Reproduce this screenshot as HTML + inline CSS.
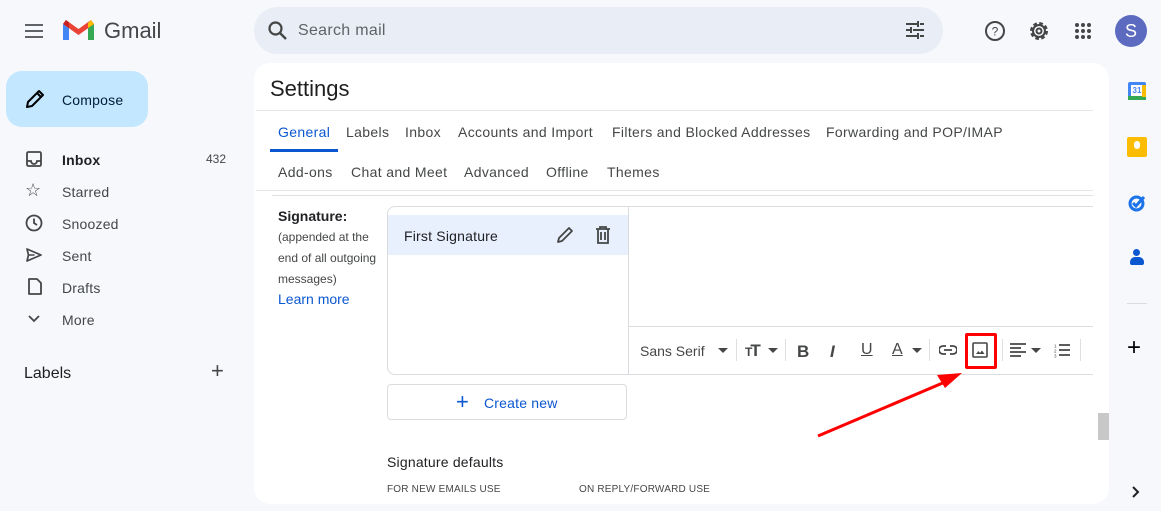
<!DOCTYPE html>
<html><head><meta charset="utf-8"><style>
*{box-sizing:border-box;margin:0;padding:0}
body{width:1161px;height:511px;overflow:hidden;background:#f6f8fc;font-family:"Liberation Sans",Arial,sans-serif;position:relative;color:#202124}
.a{position:absolute}
.nav{font-size:14px;color:#444746;letter-spacing:0.2px}
.tab{position:absolute;font-size:14px;color:#444746;letter-spacing:0.35px;margin-top:1px}
svg{display:block}
</style></head><body>
<!-- header -->
<svg class="a" style="left:24px;top:21px" width="20" height="20" viewBox="0 0 20 20"><path d="M1 4h18M1 10h18M1 16h18" stroke="#5f6368" stroke-width="2"/></svg>
<svg class="a" style="left:63px;top:20px" width="31" height="22" viewBox="0 0 31 22">
<path d="M0 4v16h6V8z" fill="#4285f4"/><path d="M25 8v12h6V4z" fill="#34a853"/>
<path d="M0 4l15.5 11L31 4 28 0 15.5 9 3 0z" fill="#ea4335"/><path d="M0 4 3 0 6 2.5V8z" fill="#c5221f"/><path d="M25 3 28 0 31 4 25 8z" fill="#fbbc04"/></svg>
<div class="a" style="left:104px;top:18px;font-size:22px;color:#444746">Gmail</div>
<div class="a" style="left:254px;top:7px;width:689px;height:47px;border-radius:24px;background:#e9eef6"></div>
<svg class="a" style="left:267px;top:20px" width="22" height="22" viewBox="0 0 22 22"><circle cx="8.5" cy="8.5" r="6" fill="none" stroke="#444746" stroke-width="2.2"/><path d="M13 13l6 6" stroke="#444746" stroke-width="2.4"/></svg>
<div class="a" style="left:298px;top:22px;font-size:16px;color:#5f6368;letter-spacing:0.3px">Search mail</div>
<svg class="a" style="left:905px;top:20px" width="20" height="20" viewBox="0 0 20 20"><path d="M1 4h11M15 4h4M1 10h4M8 10h11M1 16h11M15 16h4M13 1v6M6 7v6M13 13v6" stroke="#444746" stroke-width="2"/></svg>
<svg class="a" style="left:984px;top:20px" width="22" height="22" viewBox="0 0 22 22"><circle cx="11" cy="11" r="9" fill="none" stroke="#444746" stroke-width="2"/><text x="11" y="15.5" font-size="12" text-anchor="middle" fill="#444746" font-family="Liberation Sans">?</text></svg>
<svg class="a" style="left:1028px;top:20px" width="22" height="22" viewBox="0 0 22 22"><circle cx="11" cy="11" r="7" fill="none" stroke="#444746" stroke-width="4" stroke-dasharray="3.3 2.2"/><circle cx="11" cy="11" r="6" fill="none" stroke="#444746" stroke-width="2"/><circle cx="11" cy="11" r="2.5" fill="none" stroke="#444746" stroke-width="2"/></svg>
<svg class="a" style="left:1074px;top:22px" width="18" height="18" viewBox="0 0 18 18" fill="#444746"><circle cx="3" cy="3" r="2"/><circle cx="9" cy="3" r="2"/><circle cx="15" cy="3" r="2"/><circle cx="3" cy="9" r="2"/><circle cx="9" cy="9" r="2"/><circle cx="15" cy="9" r="2"/><circle cx="3" cy="15" r="2"/><circle cx="9" cy="15" r="2"/><circle cx="15" cy="15" r="2"/></svg>
<div class="a" style="left:1115px;top:15px;width:32px;height:32px;border-radius:50%;background:#5c6bc0;color:#fff;font-size:18px;text-align:center;line-height:32px">S</div>
<!-- compose -->
<div class="a" style="left:6px;top:71px;width:142px;height:56px;border-radius:16px;background:#c2e7ff"></div>
<svg class="a" style="left:25px;top:89px" width="20" height="20" viewBox="0 0 20 20"><path d="M2 18l1-5L14 2l4 4L7 17z M12 4l4 4" fill="none" stroke="#000" stroke-width="2" stroke-linejoin="round"/></svg>
<div class="a" style="left:62px;top:92px;font-size:14px;color:#001d35;letter-spacing:0.2px">Compose</div>
<!-- nav -->
<svg class="a" style="left:26px;top:151px" width="16" height="16" viewBox="0 0 16 16"><rect x="1" y="1" width="14" height="14" rx="1.5" fill="none" stroke="#444746" stroke-width="1.8"/><path d="M1 10h4a3 3 0 0 0 6 0h4" fill="none" stroke="#444746" stroke-width="1.8"/></svg>
<div class="a nav" style="left:62px;top:152px;font-weight:bold;color:#202124">Inbox</div>
<div class="a" style="left:206px;top:152px;font-size:12px;color:#444746">432</div>
<div class="a" style="left:25px;top:180px;font-size:18px;color:#444746">☆</div>
<div class="a nav" style="left:62px;top:184px">Starred</div>
<svg class="a" style="left:25px;top:214px" width="18" height="18" viewBox="0 0 18 18"><circle cx="9" cy="9" r="7.5" fill="none" stroke="#444746" stroke-width="1.8"/><path d="M9 4.5V9l3 2" fill="none" stroke="#444746" stroke-width="1.8"/></svg>
<div class="a nav" style="left:62px;top:216px">Snoozed</div>
<svg class="a" style="left:26px;top:248px" width="16" height="14" viewBox="0 0 16 14"><path d="M1 1l14 6-14 6 1.5-6z" fill="none" stroke="#444746" stroke-width="1.7" stroke-linejoin="round"/><path d="M2.5 7h6" stroke="#444746" stroke-width="1.5"/></svg>
<div class="a nav" style="left:62px;top:248px">Sent</div>
<svg class="a" style="left:28px;top:278px" width="14" height="17" viewBox="0 0 14 17"><path d="M1 1h8l4 4v11H1z" fill="none" stroke="#444746" stroke-width="1.8" stroke-linejoin="round"/></svg>
<div class="a nav" style="left:62px;top:280px">Drafts</div>
<svg class="a" style="left:28px;top:315px" width="12" height="8" viewBox="0 0 12 8"><path d="M1 1l5 5 5-5" fill="none" stroke="#444746" stroke-width="1.8"/></svg>
<div class="a nav" style="left:62px;top:312px">More</div>
<div class="a" style="left:24px;top:365px;font-size:16px;color:#1f1f1f">Labels</div>
<div class="a" style="left:211px;top:358px;font-size:22px;color:#444746;font-weight:300">+</div>
<!-- main panel -->
<div class="a" style="left:254px;top:63px;width:855px;height:441px;background:#fff;border-radius:16px;overflow:hidden">
 <div class="a" style="left:16px;top:13px;font-size:22px;color:#1f1f1f">Settings</div>
 <div class="a" style="left:2px;top:47px;width:840px;height:1px;background:#e6e6e6"></div>
 <div class="tab" style="left:24px;top:60px;color:#0b57d0">General</div>
 <div class="a" style="left:16px;top:86px;width:68px;height:3px;background:#0b57d0"></div>
 <div class="tab" style="left:92px;top:60px">Labels</div>
 <div class="tab" style="left:151px;top:60px">Inbox</div>
 <div class="tab" style="left:204px;top:60px">Accounts and Import</div>
 <div class="tab" style="left:358px;top:60px">Filters and Blocked Addresses</div>
 <div class="tab" style="left:572px;top:60px">Forwarding and POP/IMAP</div>
 <div class="tab" style="left:24px;top:100px">Add-ons</div>
 <div class="tab" style="left:97px;top:100px">Chat and Meet</div>
 <div class="tab" style="left:210px;top:100px">Advanced</div>
 <div class="tab" style="left:292px;top:100px">Offline</div>
 <div class="tab" style="left:353px;top:100px">Themes</div>
 <div class="a" style="left:2px;top:127px;width:840px;height:1px;background:#e6e6e6"></div>
 <div class="a" style="left:18px;top:132px;width:822px;height:1px;background:#e0e0e0"></div>
 <div class="a" style="left:24px;top:145px;font-size:14px;font-weight:bold;color:#202124">Signature:</div>
 <div class="a" style="left:24px;top:164px;font-size:12px;line-height:21px;color:#444746">(appended at the<br>end of all outgoing<br>messages)</div>
 <div class="a" style="left:24px;top:228px;font-size:14px;color:#0b57d0">Learn more</div>
 <!-- sig box -->
 <div class="a" style="left:133px;top:143px;width:720px;height:169px;border:1px solid #dadce0;border-radius:8px 0 0 8px;border-right:none"></div>
 <div class="a" style="left:134px;top:152px;width:240px;height:40px;background:#e8f0fe"></div>
 <div class="a" style="left:150px;top:165px;font-size:14px;color:#202124;letter-spacing:0.2px">First Signature</div>
 <svg class="a" style="left:302px;top:163px" width="18" height="18" viewBox="0 0 18 18"><path d="M2 16l1-4L13 2l3 3L6 15z" fill="none" stroke="#444746" stroke-width="1.8" stroke-linejoin="round"/></svg>
 <svg class="a" style="left:341px;top:163px" width="16" height="18" viewBox="0 0 16 18"><path d="M1 3h14M5 3V1h6v2M3 3v14h10V3M6 6v8M10 6v8" fill="none" stroke="#444746" stroke-width="1.8"/></svg>
 <div class="a" style="left:374px;top:144px;width:1px;height:168px;background:#dadce0"></div>
 <div class="a" style="left:374px;top:263px;width:470px;height:1px;background:#dadce0"></div>
 <div class="a" style="left:386px;top:280px;font-size:14px;color:#444746">Sans Serif</div>
 <svg class="a" style="left:464px;top:285px" width="10" height="6"><path d="M0 0h10L5 5z" fill="#444746"/></svg>
 <div class="a" style="left:482px;top:276px;width:1px;height:22px;background:#e0e0e0"></div>
 <div class="a" style="left:491px;top:278px;font-size:17px;font-weight:bold;color:#444746;letter-spacing:-2px"><span style="font-size:12px">T</span>T</div>
 <svg class="a" style="left:514px;top:285px" width="10" height="6"><path d="M0 0h10L5 5z" fill="#444746"/></svg>
 <div class="a" style="left:531px;top:276px;width:1px;height:22px;background:#e0e0e0"></div>
 <div class="a" style="left:543px;top:279px;font-size:17px;font-weight:bold;color:#444746">B</div>
 <div class="a" style="left:576px;top:279px;font-size:17px;font-style:italic;font-weight:bold;color:#444746">I</div>
 <div class="a" style="left:607px;top:278px;font-size:16px;color:#444746;text-decoration:underline">U</div>
 <div class="a" style="left:638px;top:278px;font-size:16px;color:#444746;text-decoration:underline">A</div>
 <svg class="a" style="left:658px;top:285px" width="10" height="6"><path d="M0 0h10L5 5z" fill="#444746"/></svg>
 <div class="a" style="left:675px;top:276px;width:1px;height:22px;background:#e0e0e0"></div>
 <svg class="a" style="left:685px;top:282px" width="18" height="10" viewBox="0 0 18 10"><path d="M7 1H4a4 4 0 0 0 0 8h3M11 1h3a4 4 0 0 1 0 8h-3M5 5h8" fill="none" stroke="#444746" stroke-width="1.8"/></svg>
 <svg class="a" style="left:718px;top:279px" width="16" height="16" viewBox="0 0 16 16"><rect x="1" y="1" width="14" height="14" rx="1" fill="none" stroke="#444746" stroke-width="1.6"/><path d="M4 12l2.5-3 1.5 2 2-2.5 2.5 3.5z" fill="#444746"/></svg>
 <div class="a" style="left:711px;top:270px;width:32px;height:36px;border:3px solid #f00;border-radius:2px"></div>
 <div class="a" style="left:748px;top:276px;width:1px;height:22px;background:#e0e0e0"></div>
 <svg class="a" style="left:756px;top:280px" width="16" height="15" viewBox="0 0 16 15"><path d="M0 1h16M0 5h11M0 9h16M0 13h11" stroke="#444746" stroke-width="1.8"/></svg>
 <svg class="a" style="left:777px;top:285px" width="10" height="6"><path d="M0 0h10L5 5z" fill="#444746"/></svg>
 <svg class="a" style="left:800px;top:280px" width="16" height="15" viewBox="0 0 16 15"><path d="M5 2h11M5 7h11M5 12h11" stroke="#444746" stroke-width="1.8"/><text x="0" y="4.5" font-size="4.5" fill="#444746">1</text><text x="0" y="9.5" font-size="4.5" fill="#444746">2</text><text x="0" y="14.5" font-size="4.5" fill="#444746">3</text></svg>
 <div class="a" style="left:826px;top:276px;width:1px;height:22px;background:#e0e0e0"></div>
 <div class="a" style="left:839px;top:0;width:16px;height:441px;background:#fff"></div>
 <div class="a" style="left:844px;top:350px;width:11px;height:27px;background:#c8c8c8"></div>
 <!-- create new -->
 <div class="a" style="left:133px;top:321px;width:240px;height:36px;border:1px solid #dadce0;border-radius:4px"></div>
 <div class="a" style="left:202px;top:326px;font-size:22px;color:#0b57d0;font-weight:300">+</div>
 <div class="a" style="left:230px;top:332px;font-size:14px;color:#0b57d0;letter-spacing:0.2px">Create new</div>
 <div class="a" style="left:133px;top:391px;font-size:14px;color:#202124;letter-spacing:0.2px">Signature defaults</div>
 <div class="a" style="left:133px;top:421px;font-size:10px;color:#444746;letter-spacing:0.2px">FOR NEW EMAILS USE</div>
 <div class="a" style="left:325px;top:421px;font-size:10px;color:#444746;letter-spacing:0.2px">ON REPLY/FORWARD USE</div>
</div>
<!-- arrow -->
<svg class="a" style="left:810px;top:360px" width="160" height="80" viewBox="0 0 160 80"><path d="M8 76L135 22" stroke="#f00" stroke-width="3"/><path d="M152 13l-25 2 8 13z" fill="#f00"/></svg>
<!-- right side apps -->
<div class="a" style="left:1128px;top:82px;width:18px;height:18px;border-radius:2px;background:#4285f4"></div>
<div class="a" style="left:1131px;top:85px;width:12px;height:12px;background:#fff;font-size:8px;color:#4285f4;text-align:center;line-height:12px;font-weight:bold">31</div>
<div class="a" style="left:1128px;top:96px;width:18px;height:4px;background:#34a853"></div>
<div class="a" style="left:1142px;top:85px;width:4px;height:12px;background:#fbbc04"></div>
<div class="a" style="left:1127px;top:137px;width:20px;height:20px;border-radius:2px;background:#fbbc04"></div>
<div class="a" style="left:1134px;top:141px;width:6px;height:8px;border-radius:3px;background:#fff"></div>
<svg class="a" style="left:1127px;top:193px" width="20" height="20" viewBox="0 0 20 20"><circle cx="9.5" cy="10.5" r="6.5" fill="none" stroke="#1a73e8" stroke-width="3"/><path d="M6 10l3 3 8-9" fill="none" stroke="#1a73e8" stroke-width="3"/></svg>
<div class="a" style="left:1133px;top:249px;width:7px;height:7px;border-radius:50%;background:#0b57d0"></div>
<div class="a" style="left:1130px;top:257px;width:14px;height:8px;border-radius:5px 5px 2px 2px;background:#0b57d0"></div>
<div class="a" style="left:1127px;top:303px;width:20px;height:1px;background:#dadce0"></div>
<div class="a" style="left:1127px;top:334px;font-size:24px;color:#000;font-weight:300">+</div>
<svg class="a" style="left:1132px;top:486px" width="8" height="12" viewBox="0 0 8 12"><path d="M1 1l5 5-5 5" fill="none" stroke="#202124" stroke-width="2"/></svg>
</body></html>
